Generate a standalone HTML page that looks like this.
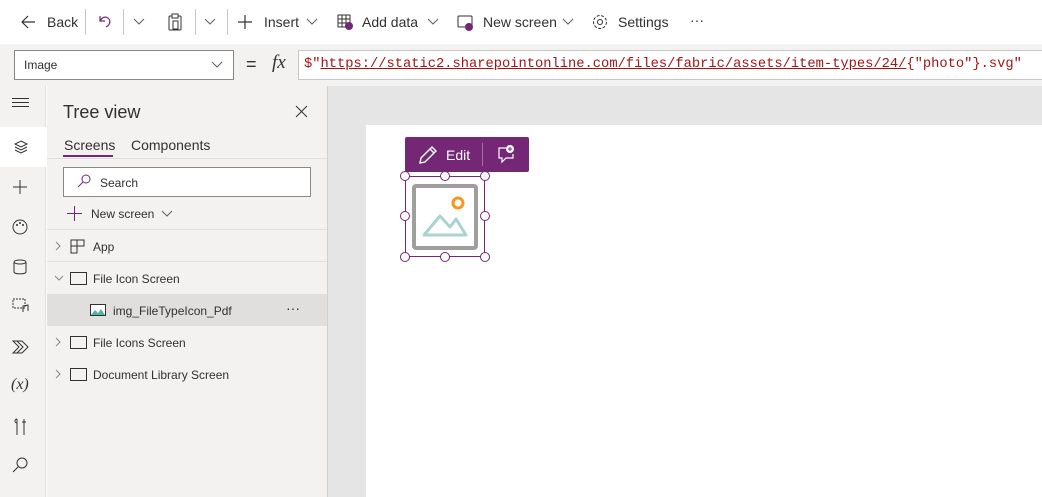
<!DOCTYPE html>
<html><head><style>
*{box-sizing:border-box;margin:0;padding:0}
body{width:1042px;height:497px;overflow:hidden;font-family:"Liberation Sans",sans-serif;background:#fff;position:relative;color:#323130}
.a{position:absolute}
.t{font-size:14px;color:#323130;white-space:nowrap}
.sm{font-size:12px}
svg{position:absolute;overflow:visible}
</style></head><body>
<div class="a" style="left:0;top:0;width:1042px;height:44px;background:#fff"></div>
<svg style="left:20px;top:14px" width="16" height="16"><path d="M15 8H2M8 2L2 8l6 6" fill="none" stroke="#323130" stroke-width="1.2"/></svg>
<div class="a t" style="left:47px;top:14px">Back</div>
<div class="a" style="left:85px;top:9px;width:1px;height:26px;background:#c8c6c4"></div>
<svg style="left:97px;top:13px" width="16" height="16"><path d="M3 3v5h5M3.5 7.5C5 4 9 3 11.5 5.5S13 12 9 14" fill="none" stroke="#742774" stroke-width="1.2"/></svg>
<div class="a" style="left:123px;top:9px;width:1px;height:26px;background:#c8c6c4"></div>
<svg style="left:133px;top:18px" width="12" height="8"><path d="M1 1l5 5 5-5" fill="none" stroke="#605e5c"/></svg>
<svg style="left:167px;top:13px" width="16" height="18"><rect x="2" y="3" width="12" height="14" rx="1" fill="none" stroke="#323130"/><rect x="5" y="1" width="6" height="4" fill="#fff" stroke="#323130"/><rect x="6" y="8" width="5" height="8" fill="none" stroke="#323130"/></svg>
<div class="a" style="left:195px;top:9px;width:1px;height:26px;background:#c8c6c4"></div>
<svg style="left:204px;top:18px" width="12" height="8"><path d="M1 1l5 5 5-5" fill="none" stroke="#605e5c"/></svg>
<div class="a" style="left:227px;top:9px;width:1px;height:26px;background:#c8c6c4"></div>
<svg style="left:237px;top:14px" width="16" height="16"><path d="M8 1v14M1 8h14" stroke="#323130" stroke-width="1.2"/></svg>
<div class="a t" style="left:264px;top:14px">Insert</div>
<svg style="left:306px;top:18px" width="12" height="8"><path d="M1 1l5 5 5-5" fill="none" stroke="#605e5c"/></svg>
<svg style="left:337px;top:14px" width="16" height="16"><rect x="1" y="1" width="12" height="12" fill="none" stroke="#323130"/><path d="M1 5h12M1 9h12M5 1v12M9 1v12" stroke="#323130"/><circle cx="12" cy="12" r="4" fill="#742774"/></svg>
<div class="a t" style="left:362px;top:14px">Add data</div>
<svg style="left:427px;top:18px" width="12" height="8"><path d="M1 1l5 5 5-5" fill="none" stroke="#605e5c"/></svg>
<svg style="left:457px;top:15px" width="16" height="16"><rect x="1" y="1" width="14" height="11" rx="1" fill="none" stroke="#323130"/><circle cx="12" cy="12" r="4" fill="#742774"/></svg>
<div class="a t" style="left:483px;top:14px">New screen</div>
<svg style="left:562px;top:18px" width="12" height="8"><path d="M1 1l5 5 5-5" fill="none" stroke="#605e5c"/></svg>
<svg style="left:592px;top:14px" width="16" height="16"><circle cx="8" cy="8" r="2.5" fill="none" stroke="#323130"/><circle cx="8" cy="8" r="6.5" fill="none" stroke="#323130" stroke-dasharray="3 1.5"/></svg>
<div class="a t" style="left:618px;top:14px">Settings</div>
<div class="a t" style="left:690px;top:12px">···</div>
<div class="a" style="left:0;top:44px;width:1042px;height:42px;background:#f3f2f1"></div>
<div class="a" style="left:14px;top:50px;width:220px;height:30px;background:#fff;border:1px solid #8a8886"></div>
<div class="a sm" style="left:24px;top:58px;color:#323130">Image</div>
<svg style="left:211px;top:61px" width="12" height="8"><path d="M1 1l5 5 5-5" fill="none" stroke="#605e5c"/></svg>
<div class="a" style="left:246px;top:54px;font-size:18px">=</div>
<div class="a" style="left:272px;top:52px;font-size:19px;font-family:'Liberation Serif',serif;font-style:italic">fx</div>
<div class="a" style="left:298px;top:50px;width:744px;height:30px;background:#fff;border:1px solid #c8c6c4;border-right:none"></div>
<div class="a" style="left:304px;top:57px;font-family:'Liberation Mono',monospace;font-size:13.75px;color:#a31515;white-space:nowrap">$"<span style="text-decoration:underline">https://static2.sharepointonline.com/files/fabric/assets/item-types/24/</span>{"photo"}.svg"</div>
<div class="a" style="left:0;top:86px;width:46px;height:411px;background:#f3f2f1;border-right:1px solid #e1dfdd"></div>
<div class="a" style="left:0;top:127px;width:46px;height:40px;background:#fff"></div>
<div class="a" style="left:12px;top:98px;width:17px;height:1px;background:#323130;box-shadow:0 4px 0 #323130,0 8px 0 #323130"></div>
<svg style="left:13px;top:139px" width="16" height="16"><path d="M8 2l6 3-6 3-6-3zM2 8l6 3 6-3M2 11l6 3 6-3" fill="none" stroke="#323130"/></svg>
<svg style="left:12px;top:179px" width="16" height="16"><path d="M8 1v14M1 8h14" stroke="#323130"/></svg>
<svg style="left:12px;top:219px" width="16" height="16"><circle cx="8" cy="8" r="7" fill="none" stroke="#323130"/><circle cx="5" cy="6" r="1" fill="#323130"/><circle cx="8" cy="4" r="1" fill="#323130"/><circle cx="11" cy="6" r="1" fill="#323130"/></svg>
<svg style="left:13px;top:259px" width="14" height="16"><ellipse cx="7" cy="3" rx="6" ry="2" fill="none" stroke="#323130"/><path d="M1 3v10c0 2.5 12 2.5 12 0V3" fill="none" stroke="#323130"/></svg>
<svg style="left:12px;top:298px" width="18" height="16"><rect x="1" y="1" width="12" height="9" fill="none" stroke="#323130" stroke-dasharray="2 1"/><path d="M11 14V8l5-1v6" fill="none" stroke="#323130"/></svg>
<svg style="left:12px;top:339px" width="18" height="16"><path d="M1 2h9l6 6-6 6H1l6-6zM5 2l6 6-6 6" fill="none" stroke="#323130"/></svg>
<div class="a" style="left:11px;top:376px;font-family:'Liberation Serif',serif;font-size:16px;font-style:italic">(x)</div>
<svg style="left:14px;top:418px" width="14" height="18"><path d="M3 1v16M3 1a2 2 0 100 4M10 1v16M8 4h4" fill="none" stroke="#323130"/></svg>
<svg style="left:12px;top:457px" width="16" height="16"><circle cx="10" cy="6" r="5" fill="none" stroke="#323130"/><path d="M6 10l-5 5" stroke="#323130"/></svg>
<div class="a" style="left:47px;top:86px;width:280px;height:411px;background:#f3f2f1"></div>
<div class="a" style="left:63px;top:102px;font-size:18px">Tree view</div>
<svg style="left:295px;top:105px" width="13" height="13"><path d="M1 1l11 11M12 1L1 12" stroke="#323130"/></svg>
<div class="a t" style="left:64px;top:137px">Screens</div>
<div class="a" style="left:63px;top:155px;width:50px;height:2px;background:#742774"></div>
<div class="a t" style="left:131px;top:137px">Components</div>
<div class="a" style="left:47px;top:158px;width:280px;height:1px;background:#e1dfdd"></div>
<div class="a" style="left:63px;top:167px;width:248px;height:30px;background:#fff;border:1px solid #8a8886"></div>
<svg style="left:77px;top:174px" width="14" height="14"><circle cx="9" cy="5" r="4" fill="none" stroke="#742774"/><path d="M6 8l-5 5" stroke="#742774"/></svg>
<div class="a sm" style="left:100px;top:176px;color:#323130">Search</div>
<svg style="left:67px;top:206px" width="15" height="15"><path d="M7.5 0v15M0 7.5h15" stroke="#742774"/></svg>
<div class="a sm" style="left:91px;top:207px">New screen</div>
<svg style="left:161px;top:210px" width="12" height="7"><path d="M1 1l5 5 5-5" fill="none" stroke="#605e5c"/></svg>
<div class="a" style="left:47px;top:229px;width:280px;height:1px;background:#e1dfdd"></div>
<div class="a" style="left:47px;top:261px;width:280px;height:1px;background:#e1dfdd"></div>
<div class="a" style="left:47px;top:294px;width:280px;height:32px;background:#e1dfdd"></div>
<svg style="left:55px;top:241px" width="6" height="10"><path d="M1 1l4 4-4 4" fill="none" stroke="#8a8886"/></svg>
<svg style="left:70px;top:239px" width="15" height="15"><path d="M1 1h13v6H7v7H1zM7 1v6M1 7h6" fill="none" stroke="#323130"/></svg>
<div class="a sm" style="left:93px;top:240px">App</div>
<svg style="left:54px;top:275px" width="10" height="6"><path d="M1 1l4 4 4-4" fill="none" stroke="#8a8886"/></svg>
<div class="a" style="left:70px;top:272px;width:17px;height:13px;border:1px solid #323130"></div>
<div class="a sm" style="left:93px;top:272px">File Icon Screen</div>
<svg style="left:90px;top:304px" width="16" height="12"><rect x="0.5" y="0.5" width="15" height="11" fill="#fff" stroke="#323130"/><path d="M1 11l4-5 3 3 3-4 4 6z" fill="#4bb8a9"/></svg>
<div class="a sm" style="left:113px;top:304px">img_FileTypeIcon_Pdf</div>
<div class="a t" style="left:286px;top:300px">···</div>
<svg style="left:55px;top:337px" width="6" height="10"><path d="M1 1l4 4-4 4" fill="none" stroke="#8a8886"/></svg>
<div class="a" style="left:70px;top:336px;width:17px;height:13px;border:1px solid #323130"></div>
<div class="a sm" style="left:93px;top:336px">File Icons Screen</div>
<svg style="left:55px;top:369px" width="6" height="10"><path d="M1 1l4 4-4 4" fill="none" stroke="#8a8886"/></svg>
<div class="a" style="left:70px;top:368px;width:17px;height:13px;border:1px solid #323130"></div>
<div class="a sm" style="left:93px;top:368px">Document Library Screen</div>
<div class="a" style="left:327px;top:86px;width:715px;height:411px;background:#e5e5e5;border-left:1px solid #d2d0ce"></div>
<div class="a" style="left:366px;top:125px;width:676px;height:372px;background:#fff"></div>
<div class="a" style="left:405px;top:137px;width:124px;height:35px;background:#742774;border-radius:2px"></div>
<svg style="left:418px;top:145px" width="20" height="20"><path d="M2 18l1-5L14 2l4 4L7 17zM12 4l4 4" fill="none" stroke="#fff" stroke-width="1.4"/></svg>
<div class="a" style="left:446px;top:147px;font-size:14px;color:#fff">Edit</div>
<div class="a" style="left:482px;top:143px;width:1px;height:23px;background:#a66ea6"></div>
<svg style="left:496px;top:145px" width="20" height="20"><path d="M10 3H3v10h3v4l4-4h7V9" fill="none" stroke="#fff" stroke-width="1.2"/><circle cx="14" cy="4" r="4" fill="#fff"/><path d="M14 2v4M12 4h4" stroke="#742774"/></svg>
<div class="a" style="left:405px;top:176px;width:80px;height:81px;border:1px solid #742774"></div>
<div class="a" style="left:412px;top:184px;width:66px;height:66px;border:4px solid #a19f9d;border-radius:4px;background:#fff"></div>
<svg style="left:420px;top:194px" width="50" height="45"><circle cx="38" cy="9" r="5" fill="none" stroke="#f7961e" stroke-width="3"/><path d="M4 41L20 22l10 11 6-8 10 16z" fill="none" stroke="#a9d3cd" stroke-width="3" stroke-linejoin="round"/></svg>
<svg style="left:0;top:0" width="1042" height="497">
<g fill="#fff" stroke="#742774"><circle cx="405" cy="176" r="4.5"/><circle cx="445" cy="176" r="4.5"/><circle cx="485" cy="176" r="4.5"/><circle cx="405" cy="216" r="4.5"/><circle cx="485" cy="216" r="4.5"/><circle cx="405" cy="257" r="4.5"/><circle cx="445" cy="257" r="4.5"/><circle cx="485" cy="257" r="4.5"/></g></svg>
</body></html>
